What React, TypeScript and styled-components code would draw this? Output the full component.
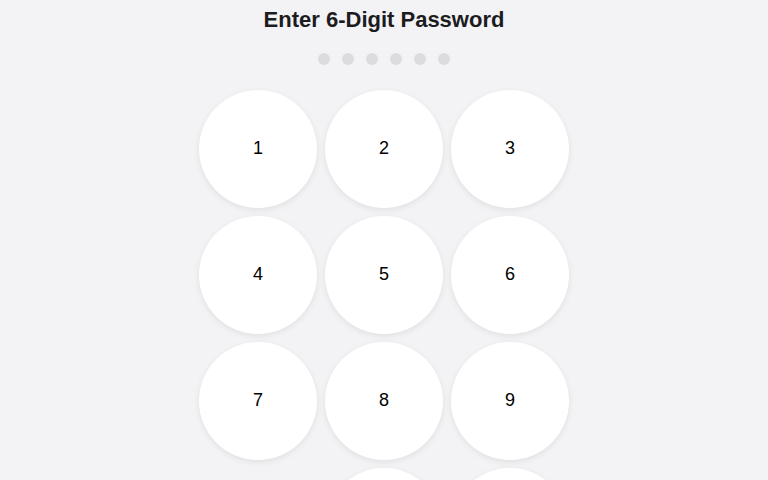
import styled, { createGlobalStyle } from "styled-components";

const keys = ["1", "2", "3", "4", "5", "6", "7", "8", "9", "", "0", "⌫"];

export default function App() {
  return (
    <>
      <GlobalStyle />
      <Page>
        <Title>Enter 6-Digit Password</Title>
        <Dots>
          {Array.from({ length: 6 }).map((_, i) => (
            <Dot key={i} />
          ))}
        </Dots>
        <Pad>
          {keys.map((k, i) =>
            k === "" ? <Blank key={i} /> : <Key key={i}>{k}</Key>
          )}
        </Pad>
      </Page>
    </>
  );
}

const GlobalStyle = createGlobalStyle`
  html, body {
    margin: 0;
    background: #f3f3f5;
    font-family: "Liberation Sans", Arial, sans-serif;
  }
`;

const Page = styled.div`
  display: flex;
  flex-direction: column;
  align-items: center;
  padding-top: 7px;
`;

const Title = styled.h2`
  margin: 0;
  font-size: 22px;
  line-height: 26px;
  font-weight: 700;
  color: #1c1c1e;
`;

const Dots = styled.div`
  display: flex;
  gap: 12px;
  margin-top: 20px;
`;

const Dot = styled.span`
  width: 12px;
  height: 12px;
  border-radius: 50%;
  background: #dcdcdf;
`;

const Pad = styled.div`
  display: grid;
  grid-template-columns: repeat(3, 118px);
  gap: 8px;
  margin-top: 25px;
`;

const Key = styled.button`
  width: 118px;
  height: 118px;
  border: none;
  border-radius: 50%;
  background: #ffffff;
  box-shadow: 0 2px 6px rgba(0, 0, 0, 0.08);
  font-family: "Liberation Sans", Arial, sans-serif;
  font-size: 18px;
  color: #000000;
  padding: 0 0 2px;
`;

const Blank = styled.div`
  width: 118px;
  height: 118px;
`;
